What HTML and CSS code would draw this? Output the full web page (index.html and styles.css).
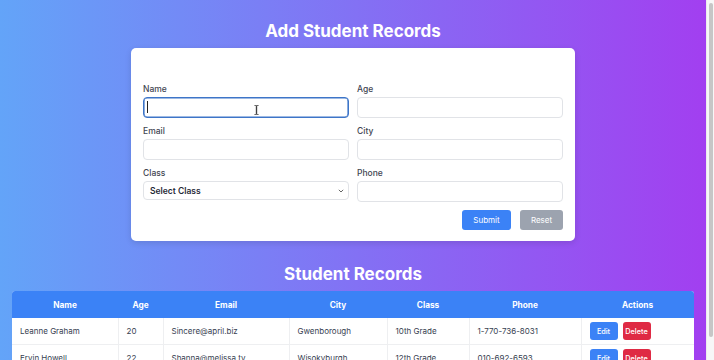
FILE: index.html
```html
<!DOCTYPE html>
<html lang="en">
<head>
  <meta charset="UTF-8" />
  <meta name="viewport" content="width=device-width, initial-scale=1.0"/>
  <title>Student Records</title>
  <link rel="stylesheet" href="styles.css">
</head>
<body>
  <div class="page">
    <h1 class="page-title">Add Student Records</h1>

    <form class="card">
      <div class="form-grid">
        <div class="field">
          <label for="name">Name</label>
          <div class="input-wrap">
            <input type="text" id="name" class="input focused" />
            <span class="caret"></span>
            <svg class="ibeam" width="5" height="10" viewBox="0 0 5 10"><path d="M0.5 0.5h1.2q1 0 1 1v7q0 1 -1 1h-1.2M4.5 0.5h-1.2q-1 0 -1 1v7q0 1 1 1h1.2" fill="none" stroke="#222" stroke-width="0.8"/></svg>
          </div>
        </div>
        <div class="field">
          <label for="age">Age</label>
          <input type="text" id="age" class="input" />
        </div>
        <div class="field">
          <label for="email">Email</label>
          <input type="text" id="email" class="input" />
        </div>
        <div class="field">
          <label for="city">City</label>
          <input type="text" id="city" class="input" />
        </div>
        <div class="field">
          <label for="class">Class</label>
          <div class="select">
            <span>Select Class</span>
            <svg width="6" height="4" viewBox="0 0 6 4"><path d="M0.8 0.8l2.2 2.2l2.2-2.2" fill="none" stroke="#555" stroke-width="0.9"/></svg>
          </div>
        </div>
        <div class="field">
          <label for="phone">Phone</label>
          <input type="text" id="phone" class="input" />
        </div>
      </div>
      <div class="actions">
        <button type="button" class="btn btn-submit">Submit</button>
        <button type="button" class="btn btn-reset">Reset</button>
      </div>
    </form>

    <h2 class="section-title">Student Records</h2>

    <table class="records">
      <colgroup>
        <col style="width:106px"><col style="width:45px"><col style="width:126px"><col style="width:98px">
        <col style="width:82px"><col style="width:112px"><col style="width:113px">
      </colgroup>
      <thead>
        <tr>
          <th>Name</th><th>Age</th><th>Email</th><th>City</th><th>Class</th><th>Phone</th><th>Actions</th>
        </tr>
      </thead>
      <tbody>
        <tr>
          <td>Leanne Graham</td><td>20</td><td>Sincere@april.biz</td><td>Gwenborough</td><td>10th Grade</td><td>1-770-736-8031</td>
          <td><button class="small edit">Edit</button><button class="small delete">Delete</button></td>
        </tr>
        <tr>
          <td>Ervin Howell</td><td>22</td><td>Shanna@melissa.tv</td><td>Wisokyburgh</td><td>12th Grade</td><td>010-692-6593</td>
          <td><button class="small edit">Edit</button><button class="small delete">Delete</button></td>
        </tr>
      </tbody>
    </table>
  </div>

  <div class="scrollbar"><div class="thumb"></div></div>
</body>
</html>
```

FILE: styles.css
```css
body {
  font-family: Inter, "Noto Sans", sans-serif;
  margin: 0;
  height: 100vh;
  overflow: hidden;
  display: flex;
  color: #374151;
}

.page {
  flex: 1;
  min-width: 0;
  padding: 19px 12px 12px;
  background: linear-gradient(to right, #63a4f8, #a23ff0);
}

.scrollbar {
  width: 8px;
  flex-shrink: 0;
  background: #f7f7f7;
  border-left: 1px solid #ececec;
  box-sizing: border-box;
  padding: 3px 1px 23px 2px;
  display: flex;
}

.thumb {
  flex: 1;
  background: #c6c6c6;
  border-radius: 3px;
}

.page-title,
.section-title {
  margin: 0;
  font-size: 17px;
  line-height: 24px;
  font-weight: 700;
  color: #fff;
  text-align: center;
}

.page-title {
  margin-bottom: 5px;
}

.section-title {
  margin-top: 21px;
  margin-bottom: 5px;
}

.card {
  width: 444px;
  box-sizing: border-box;
  margin: 0 auto;
  padding: 35px 12px 11px;
  background: #fff;
  border-radius: 5px;
  box-shadow: 0 2px 6px rgba(0, 0, 0, 0.12);
}

.form-grid {
  display: grid;
  grid-template-columns: 1fr 1fr;
  column-gap: 8px;
  row-gap: 7px;
}

.field label {
  display: block;
  font-size: 8.5px;
  font-weight: 500;
  line-height: 12px;
  color: #3f4652;
  margin-bottom: 2px;
}

.input {
  display: block;
  width: 100%;
  height: 21px;
  box-sizing: border-box;
  border: 1px solid #e1e3e7;
  border-radius: 4px;
  background: #fff;
  outline: none;
}

.input.focused {
  border: 1px solid #3d75c8;
  box-shadow: inset 0 0 0 0.6px #3d75c8;
}

.input-wrap {
  position: relative;
}

.caret {
  position: absolute;
  left: 4px;
  top: 4px;
  width: 1px;
  height: 12px;
  background: #222;
}

.ibeam {
  position: absolute;
  left: 111px;
  top: 8px;
}

.select {
  display: flex;
  align-items: center;
  justify-content: space-between;
  height: 19px;
  box-sizing: border-box;
  padding: 0 4px 0 6px;
  border: 1px solid #e1e3e7;
  border-radius: 4px;
  font-size: 8.5px;
  font-weight: 600;
  color: #1f2937;
}

.actions {
  display: flex;
  justify-content: flex-end;
  gap: 9px;
  margin-top: 8px;
}

.btn {
  height: 20px;
  border: none;
  border-radius: 3px;
  color: #fff;
  font-family: inherit;
  font-size: 8px;
  padding: 0;
}

.btn-submit {
  width: 49px;
  background: #3b82f6;
}

.btn-reset {
  width: 43px;
  background: #9ca3af;
}

.records {
  width: 682px;
  table-layout: fixed;
  border-collapse: collapse;
  background: #fff;
  font-size: 8px;
  border-radius: 3px 3px 0 0;
  overflow: hidden;
}

.records th {
  height: 27px;
  padding: 0;
  background: #3b82f6;
  color: #fff;
  font-size: 8.3px;
  font-weight: 700;
  text-align: center;
}

.records td {
  height: 26px;
  padding: 0 8px;
  border: 1px solid #eeeff1;
  border-top: none;
  color: #374151;
  white-space: nowrap;
}

.records td:first-child {
  border-left: none;
}

.records td:last-child {
  border-right: none;
}

.small {
  height: 18px;
  width: 28px;
  border: none;
  border-radius: 3px;
  color: #fff;
  font-family: inherit;
  font-size: 7.3px;
  font-weight: 500;
  padding: 0;
  vertical-align: middle;
}

.small + .small {
  margin-left: 5px;
}

.edit {
  background: #3b82f6;
}

.delete {
  background: #df2a44;
}
```
